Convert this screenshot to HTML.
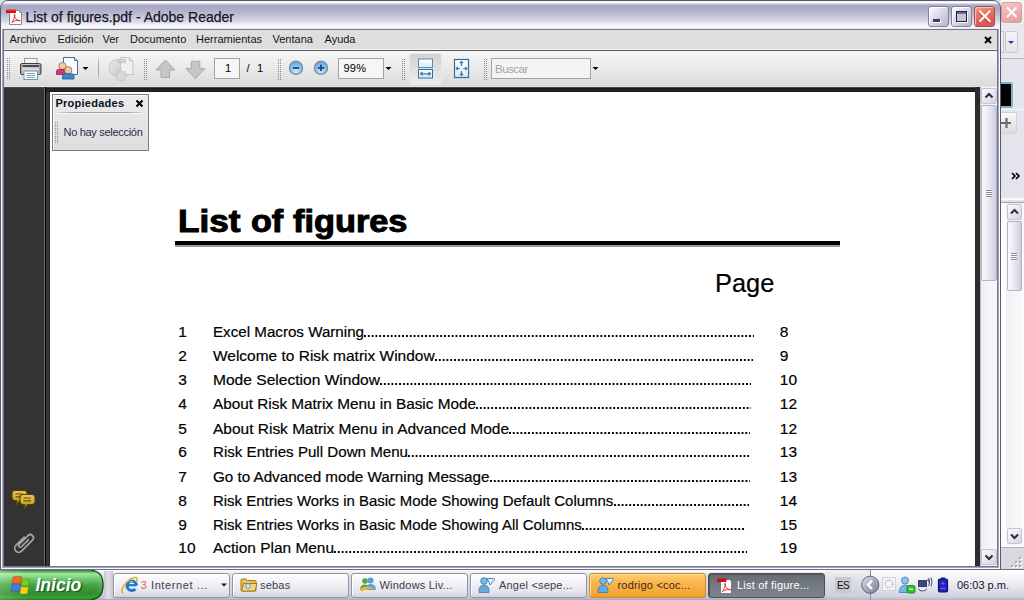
<!DOCTYPE html>
<html><head><meta charset="utf-8">
<style>
*{margin:0;padding:0;box-sizing:border-box}
html,body{width:1024px;height:600px;overflow:hidden;background:#dcdce2;font-family:"Liberation Sans",sans-serif;position:relative}
.a{position:absolute}
.t{position:absolute;white-space:nowrap;line-height:1}
.h{top:205.6px;font-size:30.5px;font-weight:bold;color:#000;transform-origin:0 0;-webkit-text-stroke:1px #000}
.d{font-size:15.5px;color:#000;transform-origin:0 0;-webkit-text-stroke:0.2px #000}
.dots{height:2px;background-image:linear-gradient(to right,#000 0,#000 1.9px,transparent 1.9px);background-size:3.82px 2px;background-repeat:repeat-x}
.m{font-size:11px;color:#141414;top:34.2px}
.grip{position:absolute;width:3px;height:22px;top:58px;background-image:radial-gradient(circle at 0.5px 0.5px,#8a8a8a 0.7px,transparent 0.8px);background-size:2px 2px}
.tbtn{position:absolute;top:6px;width:21px;height:21px;border:1px solid #8080a4;border-radius:3px;background:linear-gradient(135deg,#fafafe 0%,#e6e6f0 30%,#c8c8dc 70%,#b4b4cc 100%);box-shadow:inset 1px 1px 0 #fcfcff}
.sbtn{position:absolute;width:16px;height:16px;border:1px solid #c8c8d4;border-radius:2px;background:linear-gradient(to right,#e8e8f0,#f4f4f8 40%,#d8d8e4)}
</style></head><body>

<!-- background window at right -->
<div class="a" style="left:1000px;top:0;width:24px;height:570px;background:#e2e2ea"></div>

<!-- front window frame -->
<div class="a" style="left:0;top:0;width:1001px;height:570px;background:#a4a4bc;border:1px solid #5a5a6e;border-radius:8px 8px 0 0"></div>
<div class="a" style="left:1px;top:20px;width:999px;height:549px;border-left:1px solid #fafaff;border-right:1px solid #fafaff;border-bottom:1px solid #fafaff"></div>
<div class="a" style="left:3px;top:29px;width:995px;height:538px;border:1px solid #74748a"></div>

<!-- title bar -->
<div class="a" style="left:1px;top:1px;width:999px;height:28px;border-radius:7px 7px 0 0;background:linear-gradient(#e8e8f0 0px,#ffffff 1.2px,#ffffff 1.8px,#c0c0d4 3px,#a8a8c6 5px,#b0b0ca 10px,#c4c4d4 15px,#d8d8e4 20px,#ececf2 23px,#fbfbfd 26px,#e6e6ee 28px)"></div>
<!-- pdf icon -->
<svg class="a" style="left:5px;top:8px" width="18" height="18" viewBox="0 0 18 18">
 <path d="M4.5 2.5 H14.5 L16.5 4.5 V16.5 H4.5 Z" fill="#fff" stroke="#8a8a8a" stroke-width="1"/>
 <path d="M14.5 2.5 V4.5 H16.5" fill="#ddd" stroke="#8a8a8a" stroke-width="1"/>
 <rect x="1" y="1.5" width="10" height="3.5" fill="#d01010"/>
 <rect x="1" y="1.5" width="10" height="1" fill="#f06060"/>
 <path d="M7 14.5 C8.5 12 10 9 10 7 C10 6 9 6 9.2 7.5 C9.5 10 12 12.5 14.5 13 C15.5 13.2 15.5 12.5 14 12.3 C11.5 12 9 13 7 14.5 Z" fill="none" stroke="#e02020" stroke-width="0.9"/>
</svg>
<div class="t" style="left:25.4px;top:10.35px;font-size:14px;color:#161628;-webkit-text-stroke:0.25px #161628">List of figures.pdf - Adobe Reader</div>

<!-- title buttons -->
<div class="tbtn" style="left:928px"></div>
<div class="a" style="left:933px;top:20px;width:8px;height:3px;background:#fff"></div>
<div class="a" style="left:933px;top:19px;width:7px;height:3px;background:#3c3c56"></div>
<div class="tbtn" style="left:951px"></div>
<div class="a" style="left:957px;top:12px;width:11px;height:11px;border:1px solid #fff"></div>
<div class="a" style="left:956px;top:11px;width:11px;height:11px;border:1px solid #20203a;background:#c4c4d4"></div>
<div class="a" style="left:957px;top:12px;width:9px;height:2px;background:#6c6c84"></div>
<div class="a" style="left:974px;top:6px;width:21px;height:21px;border:1px solid #a84c4c;border-radius:3px;background:linear-gradient(160deg,#f4a08a 0%,#e87866 35%,#dc5a58 75%,#d45454 100%);box-shadow:inset 1px 1px 0 #f8c0b0"></div>
<svg class="a" style="left:974px;top:6px" width="21" height="21" viewBox="0 0 21 21">
 <path d="M6 5.5 L15.5 15 M15.5 5.5 L6 15" stroke="#7a2020" stroke-width="2.2" stroke-linecap="square" transform="translate(-0.6,0.6)" opacity="0.55"/>
 <path d="M6 5.5 L15.5 15 M15.5 5.5 L6 15" stroke="#ffffff" stroke-width="2" stroke-linecap="square"/>
</svg>

<!-- menu bar -->
<div class="a" style="left:4px;top:30px;width:993px;height:20px;background:#dedede"></div>
<div class="a" style="left:4px;top:49px;width:993px;height:1px;background:#f4f4f4"></div>
<div class="a" style="left:4px;top:50px;width:993px;height:1px;background:#5c5c5c"></div>
<div class="t m" style="left:9.5px">Archivo</div>
<div class="t m" style="left:57.5px">Edición</div>
<div class="t m" style="left:102.5px">Ver</div>
<div class="t m" style="left:130px">Documento</div>
<div class="t m" style="left:196px">Herramientas</div>
<div class="t m" style="left:272.5px">Ventana</div>
<div class="t m" style="left:324.5px">Ayuda</div>
<svg class="a" style="left:982.5px;top:35px" width="10" height="10" viewBox="0 0 10 10"><path d="M2 2 L8 8 M8 2 L2 8" stroke="#000" stroke-width="2"/></svg>

<!-- toolbar -->
<div class="a" style="left:4px;top:51px;width:993px;height:36px;background:linear-gradient(#f6f6f6,#ececec 40%,#dadada)"></div>
<div class="a" style="left:4px;top:86px;width:993px;height:1px;background:#e4e4e4"></div>

<!-- content area -->
<div class="a" style="left:4px;top:87px;width:993px;height:479px;background:#353535"></div>
<div class="a" style="left:4px;top:87px;width:993px;height:5px;background:linear-gradient(#4a4a4a 0,#4a4a4a 1px,#1a1a1a 1px,#1c1c1c 2px,#242424 2px,#242424 4px,#1a1a1a 4px)"></div>
<div class="a" style="left:4px;top:88px;width:40px;height:478px;background:#333333"></div>
<div class="a" style="left:44px;top:88px;width:1px;height:478px;background:#686868"></div>
<div class="a" style="left:45px;top:87px;width:1px;height:479px;background:#000"></div>
<div class="a" style="left:49px;top:92px;width:1px;height:474px;background:#282828"></div>
<!-- page -->
<div class="a" style="left:50px;top:92px;width:925px;height:474px;background:#fff"></div>

<!-- toolbar items -->
<div class="grip" style="left:7px;top:58px"></div>
<!-- printer -->
<svg class="a" style="left:19px;top:56px" width="24" height="25" viewBox="0 0 24 25">
 <defs><linearGradient id="pb" x1="0" y1="0" x2="1" y2="0"><stop offset="0" stop-color="#9a9a9a"/><stop offset="0.15" stop-color="#cfcfcf"/><stop offset="0.85" stop-color="#c4c4c4"/><stop offset="1" stop-color="#8a8a8a"/></linearGradient></defs>
 <rect x="5.5" y="2.5" width="12.5" height="6.5" fill="#eef6f8" stroke="#8aa4a8" stroke-width="1"/>
 <rect x="1.5" y="7.5" width="20.5" height="11" rx="1.5" fill="url(#pb)" stroke="#404040" stroke-width="1"/>
 <rect x="3.5" y="9" width="16.5" height="2" fill="#4a4a4a"/>
 <rect x="3.5" y="12.5" width="16.5" height="2" fill="#dcdcdc"/>
 <rect x="5" y="15" width="13.5" height="8.5" fill="#f8fcfe" stroke="#6a98a8" stroke-width="1"/>
 <path d="M7.5 17.5 H16 M7.5 19.5 H16 M7.5 21.5 H16" stroke="#8a9aa4" stroke-width="0.9"/>
</svg>
<!-- share/collab icon -->
<svg class="a" style="left:55px;top:56px" width="24" height="24" viewBox="0 0 24 24">
 <path d="M8.5 1.5 H19.5 L22.5 4.5 V18.5 H8.5 Z" fill="#f8fbff" stroke="#4a6a98" stroke-width="1"/>
 <path d="M19.5 1.5 V4.5 H22.5" fill="#dde8f4" stroke="#4a6a98" stroke-width="1"/>
 <circle cx="7.5" cy="10" r="3.6" fill="#f4c89a" stroke="#a07040" stroke-width="0.8"/>
 <path d="M1.5 18.5 V15.5 Q1.5 13.5 3.5 13.5 H11.5 Q13.5 13.5 13.5 15.5 V18.5 Z" fill="#d03a70" stroke="#902050" stroke-width="0.8"/>
 <circle cx="13.3" cy="14.2" r="3.6" fill="#f4c89a" stroke="#a07040" stroke-width="0.8"/>
 <path d="M7.5 23 V19.8 Q7.5 17.8 9.5 17.8 H17 Q19 17.8 19 19.8 V23 Z" fill="#3a88cc" stroke="#1a5a98" stroke-width="0.8"/>
</svg>
<svg class="a" style="left:82px;top:66px" width="7" height="5" viewBox="0 0 7 5"><path d="M0.5 1 H6.5 L3.5 4 Z" fill="#000"/></svg>
<div class="a" style="left:98px;top:57px;width:1px;height:23px;background:linear-gradient(#e8e8e8,#a8a8a8 30%,#a8a8a8 70%,#e0e0e0)"></div>
<!-- disabled icon -->
<svg class="a" style="left:107px;top:56px" width="28" height="26" viewBox="0 0 28 26">
 <defs><linearGradient id="dg" x1="0" y1="0" x2="1" y2="1"><stop offset="0" stop-color="#e8e8e8"/><stop offset="1" stop-color="#c8c8c8"/></linearGradient></defs>
 <circle cx="10.5" cy="12" r="8.5" fill="url(#dg)" stroke="#c8c8c8" stroke-width="1"/>
 <path d="M13.5 1.5 H22.5 L26 5 V18.5 H13.5 Z" fill="#f0f0f0" stroke="#c4c4c4" stroke-width="1"/>
 <path d="M22.5 1.5 V5 H26" fill="#e4e4e4" stroke="#c4c4c4" stroke-width="1"/>
 <rect x="11" y="3.5" width="7.5" height="3" fill="#d4d4d4" stroke="#bcbcbc" stroke-width="0.7"/>
 <path d="M14 13.5 L15.6 16 L18.5 15.3 L17.6 18.2 L20 20 L17.6 21.6 L18.2 24.5 L15.3 23.8 L14 26 L12.4 23.8 L9.5 24.5 L10.2 21.6 L8 20 L10.4 18.2 L9.5 15.3 L12.4 16 Z" fill="#d8d8d8" stroke="#c4c4c4" stroke-width="0.8"/>
</svg>
<div class="grip" style="left:144px;top:59px"></div>
<!-- up/down arrows -->
<svg class="a" style="left:155px;top:59px" width="21" height="20" viewBox="0 0 21 20">
 <path d="M10.5 1 L19.8 11 H14.5 V18.5 H6 V11 H1.2 Z" fill="#c6c6c6" stroke="#a8a8a8" stroke-width="1"/>
</svg>
<svg class="a" style="left:185px;top:60px" width="21" height="20" viewBox="0 0 21 20">
 <path d="M6.3 1.3 H14.8 V8.6 H19.8 L10.4 18.6 L1 8.6 H6.3 Z" fill="#c6c6c6" stroke="#a8a8a8" stroke-width="1"/>
</svg>
<!-- page box -->
<div class="a" style="left:214px;top:58px;width:26px;height:21px;border:1px solid #a4a4a4;background:#f6f6f6"></div>
<div class="t" style="left:225px;top:62.8px;font-size:11px;color:#000">1</div>
<div class="t" style="left:246.5px;top:62.8px;font-size:11px;color:#000">/</div>
<div class="t" style="left:257px;top:62.8px;font-size:11px;color:#000">1</div>
<div class="grip" style="left:278px;top:59px"></div>
<!-- zoom circles -->
<svg class="a" style="left:287px;top:59px" width="18" height="18" viewBox="0 0 18 18">
 <defs><radialGradient id="zg" cx="0.5" cy="0.75" r="0.7"><stop offset="0" stop-color="#c8e8ff"/><stop offset="0.6" stop-color="#8cc0ec"/><stop offset="1" stop-color="#6aa0d4"/></radialGradient></defs>
 <circle cx="9" cy="8.8" r="6.6" fill="url(#zg)" stroke="#7a8ea0" stroke-width="1.2"/>
 <rect x="5.8" y="8" width="6.4" height="1.8" fill="#1a4a80"/>
</svg>
<svg class="a" style="left:312px;top:59px" width="18" height="18" viewBox="0 0 18 18">
 <circle cx="9" cy="8.8" r="6.6" fill="url(#zg)" stroke="#7a8ea0" stroke-width="1.2"/>
 <rect x="5.8" y="8" width="6.4" height="1.8" fill="#1a4a80"/>
 <rect x="8.1" y="5.7" width="1.8" height="6.4" fill="#1a4a80"/>
</svg>
<!-- zoom box -->
<div class="a" style="left:338px;top:58px;width:46px;height:21px;border:1px solid #a4a4a4;background:#f6f6f6"></div>
<div class="t" style="left:343.5px;top:62.6px;font-size:11px;color:#000;letter-spacing:0.2px">99%</div>
<svg class="a" style="left:385px;top:66px" width="7" height="5" viewBox="0 0 7 5"><path d="M0.5 1 H6.5 L3.5 4 Z" fill="#000"/></svg>
<div class="grip" style="left:402px;top:59px"></div>
<!-- pressed fit-width button -->
<div class="a" style="left:409px;top:53px;width:33px;height:32px;border:1px solid #e8e8e8;border-radius:3px;background:linear-gradient(#d2d2d2,#dcdcdc 40%,#ececec)"></div>
<svg class="a" style="left:417px;top:58px" width="18" height="22" viewBox="0 0 18 22">
 <defs><linearGradient id="fg" x1="0" y1="0" x2="0" y2="1"><stop offset="0" stop-color="#ffffff"/><stop offset="1" stop-color="#d8ecf8"/></linearGradient></defs>
 <rect x="1.5" y="1" width="14" height="8.5" fill="url(#fg)" stroke="#5a8ab8" stroke-width="1" stroke-dasharray="0"/>
 <rect x="1.5" y="11.5" width="14" height="8.5" fill="url(#fg)" stroke="#3a6a98" stroke-width="1"/>
 <path d="M3.5 15.8 H13.5 M5.5 14 L3.5 15.8 L5.5 17.6 M11.5 14 L13.5 15.8 L11.5 17.6" fill="none" stroke="#3a78b0" stroke-width="1.2"/>
</svg>
<!-- fit page icon -->
<svg class="a" style="left:453px;top:58px" width="17" height="21" viewBox="0 0 17 21">
 <rect x="1.5" y="1.5" width="14" height="18" fill="url(#fg)" stroke="#3a6a98" stroke-width="1.2"/>
 <path d="M8.5 3.5 V8 M6.8 5.2 L8.5 3.5 L10.2 5.2 M8.5 13 V17.5 M6.8 15.8 L8.5 17.5 L10.2 15.8 M3.2 10.5 H6.8 M4.8 8.8 L3.2 10.5 L4.8 12.2 M10.2 10.5 H13.8 M12.2 8.8 L13.8 10.5 L12.2 12.2" fill="none" stroke="#3a78b0" stroke-width="1.2"/>
</svg>
<div class="grip" style="left:484px;top:59px"></div>
<!-- search box -->
<div class="a" style="left:491px;top:58px;width:100px;height:21px;border:1px solid #a4a4a4;background:#f4f4f4"></div>
<div class="t" style="left:495px;top:63.8px;font-size:11.5px;color:#a4a4a4;letter-spacing:-0.5px">Buscar</div>
<svg class="a" style="left:592px;top:66px" width="7" height="5" viewBox="0 0 7 5"><path d="M0.5 1 H6.5 L3.5 4 Z" fill="#000"/></svg>
<!-- document content -->
<div class="t h" style="left:178px;transform:scaleX(1.15)">List</div>
<div class="t h" style="left:251px;transform:scaleX(1.12)">of</div>
<div class="t h" style="left:292.5px;transform:scaleX(1.125)">figures</div>
<div class="a" style="left:175px;top:241px;width:665px;height:4px;background:#000"></div>
<div class="a" style="left:175px;top:245px;width:665px;height:1.5px;background:#9a9a9a"></div>
<div class="t" style="left:715.3px;top:270.5px;font-size:25px;color:#000;transform:scaleX(1.015);-webkit-text-stroke:0.2px #000;transform-origin:0 0">Page</div>
<div class="t d" style="left:178.3px;top:323.63px">1</div>
<div class="t d" style="left:212.8px;top:323.63px;transform:scaleX(0.9775)">Excel Macros Warning</div>
<div class="a dots" style="left:364.2px;top:334.8px;width:389.7px"></div>
<div class="t d" style="left:779.8px;top:323.63px">8</div>
<div class="t d" style="left:178.3px;top:347.58px">2</div>
<div class="t d" style="left:212.8px;top:347.58px;transform:scaleX(0.9985)">Welcome to Risk matrix Window</div>
<div class="a dots" style="left:434.8px;top:358.7px;width:318.3px"></div>
<div class="t d" style="left:779.8px;top:347.58px">9</div>
<div class="t d" style="left:178.3px;top:371.88px">3</div>
<div class="t d" style="left:212.8px;top:371.88px;transform:scaleX(1.0043)">Mode Selection Window</div>
<div class="a dots" style="left:380.2px;top:383.0px;width:371.3px"></div>
<div class="t d" style="left:779.8px;top:371.88px">10</div>
<div class="t d" style="left:178.3px;top:395.63px">4</div>
<div class="t d" style="left:212.8px;top:395.63px;transform:scaleX(0.9880)">About Risk Matrix Menu in Basic Mode</div>
<div class="a dots" style="left:476.2px;top:406.8px;width:275.3px"></div>
<div class="t d" style="left:779.8px;top:395.63px">12</div>
<div class="t d" style="left:178.3px;top:420.88px">5</div>
<div class="t d" style="left:212.8px;top:420.88px;transform:scaleX(0.9988)">About Risk Matrix Menu in Advanced Mode</div>
<div class="a dots" style="left:509.2px;top:432.0px;width:240.7px"></div>
<div class="t d" style="left:779.8px;top:420.88px">12</div>
<div class="t d" style="left:178.3px;top:443.68px">6</div>
<div class="t d" style="left:212.8px;top:443.68px;transform:scaleX(0.9757)">Risk Entries Pull Down Menu</div>
<div class="a dots" style="left:408.2px;top:454.8px;width:340.9px"></div>
<div class="t d" style="left:779.8px;top:443.68px">13</div>
<div class="t d" style="left:178.3px;top:468.58px">7</div>
<div class="t d" style="left:212.8px;top:468.58px;transform:scaleX(0.9800)">Go to Advanced mode Warning Message</div>
<div class="a dots" style="left:489.6px;top:479.7px;width:260.9px"></div>
<div class="t d" style="left:779.8px;top:468.58px">13</div>
<div class="t d" style="left:178.3px;top:492.68px">8</div>
<div class="t d" style="left:212.8px;top:492.68px;transform:scaleX(0.9647)">Risk Entries Works in Basic Mode Showing Default Columns</div>
<div class="a dots" style="left:613.5px;top:503.8px;width:135.0px"></div>
<div class="t d" style="left:779.8px;top:492.68px">14</div>
<div class="t d" style="left:178.3px;top:516.58px">9</div>
<div class="t d" style="left:212.8px;top:516.58px;transform:scaleX(0.9647)">Risk Entries Works in Basic Mode Showing All Columns</div>
<div class="a dots" style="left:581.9px;top:527.7px;width:164.0px"></div>
<div class="t d" style="left:779.8px;top:516.58px">15</div>
<div class="t d" style="left:178.3px;top:539.88px">10</div>
<div class="t d" style="left:212.8px;top:539.88px;transform:scaleX(0.9959)">Action Plan Menu</div>
<div class="a dots" style="left:334.2px;top:551.0px;width:413.3px"></div>
<div class="t d" style="left:779.8px;top:539.88px">19</div>

<!-- Propiedades panel -->
<div class="a" style="left:52px;top:94px;width:97px;height:57px;border:1px solid #7c7c7c;background:linear-gradient(#ececec,#dedede);box-shadow:inset 1px 1px 0 #fafafa"></div>
<div class="t" style="left:55.5px;top:98.3px;font-size:11px;font-weight:bold;color:#08121e;letter-spacing:0.25px">Propiedades</div>
<svg class="a" style="left:135px;top:99px" width="9" height="9" viewBox="0 0 9 9"><path d="M1.5 1.5 L7.5 7.5 M7.5 1.5 L1.5 7.5" stroke="#000" stroke-width="2.1"/></svg>
<div class="a" style="left:57px;top:112px;width:86px;height:1px;background:linear-gradient(to right,#d8d8d8,#a0a0a0 20%,#a0a0a0 80%,#d8d8d8)"></div>
<div class="a" style="left:57px;top:113px;width:86px;height:1px;background:#f8f8f8"></div>
<div class="grip" style="left:55px;top:122px;height:22px"></div>
<div class="t" style="left:63.5px;top:126.6px;font-size:11px;color:#2c2c44;letter-spacing:-0.3px">No hay selección</div>

<!-- left nav icons -->
<svg class="a" style="left:10px;top:489px" width="28" height="22" viewBox="0 0 28 22">
 <defs><linearGradient id="bg1" x1="0" y1="0" x2="0" y2="1"><stop offset="0" stop-color="#e4c858"/><stop offset="0.6" stop-color="#ccaa2c"/><stop offset="1" stop-color="#aa8a1c"/></linearGradient></defs>
 <path d="M5 1.5 H14 Q17 1.5 17 4.5 V8.5 Q17 11.5 14 11.5 H9.5 L6.5 16 L6.8 11.5 H5 Q2 11.5 2 8.5 V4.5 Q2 1.5 5 1.5 Z" fill="url(#bg1)" stroke="#5a4206" stroke-width="1.1"/>
 <path d="M5.5 5 H13 M5.5 7.8 H13" stroke="#6a4e08" stroke-width="1.2"/>
 <path d="M13 5.5 H22 Q25 5.5 25 8.5 V12.5 Q25 15.5 22 15.5 H17.5 L14.5 20 L14.8 15.5 H13 Q10 15.5 10 12.5 V8.5 Q10 5.5 13 5.5 Z" fill="url(#bg1)" stroke="#5a4206" stroke-width="1.1"/>
 <path d="M13.5 9 H21 M13.5 11.8 H21" stroke="#6a4e08" stroke-width="1.2"/>
</svg>
<svg class="a" style="left:8px;top:527px" width="32" height="32" viewBox="0 0 32 32">
 <g transform="rotate(-45 16 16)" fill="none" stroke="#a4a4a4" stroke-width="1.7">
  <path d="M21 12 H8.5 A4 4 0 0 0 8.5 20 H24 A3.2 3.2 0 0 0 24 13.6 H11.5 A1.6 1.6 0 0 0 11.5 16.8 H22"/>
 </g>
</svg>
<!-- main scrollbar -->
<div class="a" style="left:975px;top:87px;width:5px;height:479px;background:#2c2c2c"></div>
<div class="a" style="left:980px;top:87px;width:17px;height:479px;background:linear-gradient(to right,#ececf4,#f2f2f8 40%,#f8f8fc)"></div>
<div class="a" style="left:980px;top:87px;width:1px;height:479px;background:#bcbcc4"></div>
<div class="sbtn" style="left:981px;top:88px;background:linear-gradient(135deg,#fcfcfe,#e4e4ee 60%,#d4d4e2);border-color:#c4c4d0"></div>
<svg class="a" style="left:981px;top:88px" width="16" height="16" viewBox="0 0 16 16"><path d="M4.5 9.5 L8 6 L11.5 9.5" fill="none" stroke="#2c2c3c" stroke-width="2"/></svg>
<div class="a" style="left:981px;top:105px;width:16px;height:176px;border:1px solid #b4b4c4;border-radius:2px;background:linear-gradient(to right,#f8f8fc,#eeeef6 35%,#d4d4e4 90%,#c8c8da)"></div>
<div class="a" style="left:986px;top:190px;width:6px;height:7px;background:repeating-linear-gradient(#8a8a8e 0 1px,#fff 1px 2px)"></div>
<div class="sbtn" style="left:981px;top:549px;background:linear-gradient(135deg,#fcfcfe,#e4e4ee 60%,#d4d4e2);border-color:#c4c4d0"></div>
<svg class="a" style="left:981px;top:549px" width="16" height="16" viewBox="0 0 16 16"><path d="M4.5 6.5 L8 10 L11.5 6.5" fill="none" stroke="#2c2c3c" stroke-width="2"/></svg>

<!-- background window details (right strip) -->
<div class="a" style="left:1001px;top:0;width:23px;height:24px;background:linear-gradient(#fafafc,#ececf2)"></div>
<div class="a" style="left:1001px;top:2px;width:21px;height:21px;border:1px solid #d4a0a0;border-radius:3px;background:linear-gradient(160deg,#f4c8c0,#e8aaa8 70%,#e0a0a0)"></div>
<svg class="a" style="left:1001px;top:2px" width="21" height="21" viewBox="0 0 21 21"><path d="M6 5.5 L15.5 15 M15.5 5.5 L6 15" stroke="#fff" stroke-width="2"/></svg>
<div class="a" style="left:1001px;top:24px;width:23px;height:35px;background:#e8e8ee"></div>
<div class="a" style="left:1001px;top:31px;width:3px;height:22px;border:1px solid #c8c8d4;border-left:none;background:#f0f0f4"></div>
<div class="a" style="left:1005px;top:31px;width:13px;height:22px;border:1px solid #c8c8d4;border-radius:2px;background:linear-gradient(#f4f4f8,#e4e4ec)"></div>
<svg class="a" style="left:1004.5px;top:39.5px" width="12" height="6" viewBox="0 0 12 6"><path d="M3 1 H9 L6 4 Z" fill="#1a3cb0"/></svg>
<div class="a" style="left:1001px;top:58px;width:23px;height:1px;background:#b4b4c0"></div>
<div class="a" style="left:1001px;top:59px;width:23px;height:140px;background:#e4e4ec"></div>
<div class="a" style="left:1001px;top:82px;width:12px;height:26px;background:#000;border:2px solid #78b4c4;border-left:none;border-radius:0 3px 3px 0"></div>
<div class="a" style="left:1001px;top:109px;width:23px;height:1px;background:#f6f6fa"></div>
<div class="a" style="left:1001px;top:112px;width:16px;height:22px;border:1px solid #d0d0d8;border-left:none;border-radius:0 3px 3px 0;background:linear-gradient(#fafafa,#dcdcdc)"></div>
<svg class="a" style="left:1001px;top:112px" width="14" height="22" viewBox="0 0 14 22"><path d="M0 11 H10 M5.5 6 V16" stroke="#6c6c6c" stroke-width="2.2"/></svg>
<svg class="a" style="left:1010px;top:171px" width="12" height="10" viewBox="0 0 12 10"><path d="M2 2 L5 5 L2 8 M6 2 L9 5 L6 8" fill="none" stroke="#000" stroke-width="1.6"/></svg>
<div class="a" style="left:1001px;top:198px;width:23px;height:2px;background:#fafafa"></div>
<div class="a" style="left:1001px;top:202px;width:23px;height:1px;background:#a4a4ac"></div>
<div class="a" style="left:1001px;top:203px;width:23px;height:344px;background:#fcfcfc"></div>
<div class="a" style="left:1006px;top:203px;width:16px;height:344px;background:linear-gradient(to right,#f0f0f4,#f8f8fa)"></div>
<div class="sbtn" style="left:1007px;top:204px;width:15px;background:linear-gradient(135deg,#fcfcfe,#e4e4ee 60%,#d4d4e2);border-color:#c4c4d0"></div>
<svg class="a" style="left:1007px;top:204px" width="15" height="16" viewBox="0 0 15 16"><path d="M4 9.5 L7.5 6 L11 9.5" fill="none" stroke="#2c2c3c" stroke-width="2"/></svg>
<div class="a" style="left:1007px;top:221px;width:15px;height:70px;border:1px solid #b4b4c4;border-radius:2px;background:linear-gradient(to right,#f8f8fc,#eeeef6 35%,#d4d4e4 90%,#c8c8da)"></div>
<div class="a" style="left:1011px;top:253px;width:6px;height:7px;background:repeating-linear-gradient(#8a8a8e 0 1px,#fff 1px 2px)"></div>
<div class="sbtn" style="left:1007px;top:528px;width:15px;background:linear-gradient(135deg,#fcfcfe,#e4e4ee 60%,#d4d4e2);border-color:#c4c4d0"></div>
<svg class="a" style="left:1007px;top:528px" width="15" height="16" viewBox="0 0 15 16"><path d="M4 6.5 L7.5 10 L11 6.5" fill="none" stroke="#2c2c3c" stroke-width="2"/></svg>
<div class="a" style="left:1001px;top:545px;width:23px;height:2px;background:#fafafa"></div>
<div class="a" style="left:1001px;top:547px;width:23px;height:1px;background:#b0b0b8"></div>
<div class="a" style="left:1001px;top:548px;width:23px;height:22px;background:#dadade"></div>
<svg class="a" style="left:1010px;top:556px" width="14" height="14" viewBox="0 0 14 14" fill="#fff">
 <rect x="10" y="2" width="2" height="2"/><rect x="6" y="6" width="2" height="2"/><rect x="10" y="6" width="2" height="2"/>
 <rect x="2" y="10" width="2" height="2"/><rect x="6" y="10" width="2" height="2"/><rect x="10" y="10" width="2" height="2"/>
</svg>
<svg class="a" style="left:1009px;top:555px" width="14" height="14" viewBox="0 0 14 14" fill="#a8a8b0">
 <rect x="10" y="2" width="2" height="2"/><rect x="6" y="6" width="2" height="2"/><rect x="10" y="6" width="2" height="2"/>
 <rect x="2" y="10" width="2" height="2"/><rect x="6" y="10" width="2" height="2"/><rect x="10" y="10" width="2" height="2"/>
</svg>

<!-- taskbar -->
<div class="a" style="left:0;top:569px;width:1024px;height:31px;background:linear-gradient(#6c6c84 0,#6c6c84 1px,#fafafc 1px,#fafafc 2px,#e8e8f0 4px,#dcdce6 12px,#d0d0de 24px,#c0c0d0 29px,#a8a8bc 31px)"></div>
<!-- start button -->
<svg class="a" style="left:0;top:570px" width="108" height="30" viewBox="0 0 108 30">
 <defs>
  <linearGradient id="sg" x1="0" y1="0" x2="0" y2="1">
   <stop offset="0" stop-color="#2a7a2a"/><stop offset="0.06" stop-color="#5ab85a"/><stop offset="0.13" stop-color="#a8e8a8"/><stop offset="0.3" stop-color="#70c870"/>
   <stop offset="0.5" stop-color="#44a444"/><stop offset="0.78" stop-color="#2e8e2e"/><stop offset="0.93" stop-color="#3a9e3a"/><stop offset="1" stop-color="#227a22"/>
  </linearGradient>
  <linearGradient id="sg2" x1="0" y1="0" x2="1" y2="0">
   <stop offset="0" stop-color="#fff" stop-opacity="0.2"/><stop offset="0.25" stop-color="#fff" stop-opacity="0"/><stop offset="0.85" stop-color="#000" stop-opacity="0"/><stop offset="1" stop-color="#fff" stop-opacity="0.12"/>
  </linearGradient>
 </defs>
 <path d="M0 0 H90 Q103.5 0 103.5 15 Q103.5 30 90 30 H0 Z" fill="url(#sg)"/>
 <path d="M0 0 H90 Q103.5 0 103.5 15 Q103.5 30 90 30 H0 Z" fill="url(#sg2)"/>
 <path d="M91 0.5 Q103 1 103 15 Q103 29 91 29.5" fill="none" stroke="#0e4a0e" stroke-width="1.2"/>
 <!-- windows flag -->
 <g transform="translate(11,6)">
  <path d="M2 1.2 Q6 -0.3 10.5 0.6 L9.6 7.6 Q5.5 6.6 1 7.6 Z" fill="#f06a20" stroke="#a84010" stroke-width="0.4"/>
  <path d="M11.2 2.6 Q14.6 3.6 18.6 2.6 L17.6 9.6 Q14 10.6 10.3 9.6 Z" fill="#78d020" stroke="#3a7a10" stroke-width="0.4"/>
  <path d="M0.9 8.3 Q4.6 7.3 9.3 8.3 L8.3 15.3 Q4 14.3 -0.1 15.3 Z" fill="#4878e8" stroke="#1a4a9a" stroke-width="0.4"/>
  <path d="M10 10.4 Q13.6 11.4 17.4 10.4 L16.4 17.4 Q12.6 18.4 9 17.4 Z" fill="#f8d018" stroke="#a08010" stroke-width="0.4"/>
 </g>
 <text x="36" y="21.4" font-family="Liberation Sans" font-size="17.6" font-weight="bold" font-style="italic" fill="#0a3a0a" opacity="0.55" transform="translate(1,1)">Inicio</text>
 <text x="35.4" y="21.4" font-family="Liberation Sans" font-size="17.6" font-weight="bold" font-style="italic" fill="#ffffff">Inicio</text>
</svg>

<!-- taskbar buttons -->
<style>
.tb{position:absolute;top:573px;height:25px;width:117px;border:1px solid #9494a8;border-radius:3px;background:linear-gradient(#ffffff,#f4f4f8 30%,#e6e6ee 75%,#d4d4e0);box-shadow:inset 1px 1px 0 #fff}
.tt{position:absolute;top:579.7px;font-size:11px;color:#3c3c4c;white-space:nowrap;line-height:1;letter-spacing:0.2px}
</style>
<div class="a" style="left:104px;top:571px;width:9px;height:28px;background:linear-gradient(to right,#c8c8d4,#e0e0e8 50%,#c4c4d0)"></div>
<div class="tb" style="left:113px"></div>
<div class="tb" style="left:232px"></div>
<div class="tb" style="left:351px"></div>
<div class="tb" style="left:470px"></div>
<div class="tb" style="left:589px;border-color:#d08a2a;background:linear-gradient(#fdd070,#fab650 35%,#f6a838 80%,#f09c30);box-shadow:inset 1px 1px 0 #ffe0a0"></div>
<div class="tb" style="left:708px;border-color:#4a5058;background:linear-gradient(#646a72,#727880 40%,#7c838a);box-shadow:inset 1px 1px 0 #50565e"></div>

<!-- IE icon -->
<svg class="a" style="left:119px;top:575px" width="21" height="20" viewBox="0 0 21 20">
 <path d="M17.6 10.2 A4.8 4.8 0 1 0 16.4 14" fill="none" stroke="#1e78d0" stroke-width="3"/>
 <path d="M9 10.2 H17.8" stroke="#1e78d0" stroke-width="2.2"/>
 <path d="M10.5 7 Q12.5 6 14.5 7" stroke="#8cd0ff" stroke-width="1" fill="none"/>
 <path d="M4 18.5 Q1 15 6.5 8.5 Q12 2 17 2.5 Q19.5 3.5 17 7" fill="none" stroke="#d8b040" stroke-width="1.6"/>
</svg>
<div class="tt" style="left:140.8px;color:#e0684a;letter-spacing:0">3</div>
<div class="tt" style="left:151px;letter-spacing:0.6px">Internet ...</div>
<svg class="a" style="left:220px;top:582px" width="8" height="6" viewBox="0 0 8 6"><path d="M1 1.5 H7 L4 4.5 Z" fill="#202030"/></svg>

<!-- folder icon -->
<svg class="a" style="left:240px;top:577px" width="18" height="16" viewBox="0 0 18 16">
 <path d="M1 3 Q1 2 2 2 H6 L7.5 3.5 H15 Q16 3.5 16 4.5 V13 Q16 14 15 14 H2 Q1 14 1 13 Z" fill="#e8c060" stroke="#a07820" stroke-width="1"/>
 <path d="M3.5 6.5 H17 L15 14 H1.5 Z" fill="#f8d878" stroke="#a07820" stroke-width="1"/>
 <circle cx="8" cy="9" r="2.6" fill="#b8e4f0" stroke="#6a8ea0" stroke-width="0.8"/>
</svg>
<div class="tt" style="left:260px">sebas</div>

<!-- MSN icon -->
<svg class="a" style="left:359px;top:577px" width="19" height="16" viewBox="0 0 19 16">
 <circle cx="6" cy="4" r="2.8" fill="#4aa84a"/>
 <circle cx="11.5" cy="3.5" r="3" fill="#5aa0d8"/>
 <path d="M1 13 Q1 7.5 6 7.5 Q9 7.5 10 10 Z" fill="#4aa84a"/>
 <path d="M6 13 Q6 7 11.5 7 Q17 7 17 13 Z" fill="#5aa0d8"/>
 <path d="M1 11.5 Q9 7 17.5 12.5 Q10 10.5 2 14.5 Z" fill="#f0b030"/>
</svg>
<div class="tt" style="left:379.5px">Windows Liv...</div>

<!-- messenger person icons -->
<svg class="a" style="left:478px;top:576px" width="18" height="18" viewBox="0 0 18 18">
 <path d="M9 2.5 L16 2.5 Q17 2.5 16.5 3.5 L12 9 L11 6 Z" fill="#e4f0fa" stroke="#4a88c0" stroke-width="1"/>
 <circle cx="6" cy="5" r="3.3" fill="#7ab8e4" stroke="#3a78b0" stroke-width="0.8"/>
 <path d="M1 16.5 Q0.5 9 6 9 Q11.5 9 11 16.5 Z" fill="#6aa8dc" stroke="#3a78b0" stroke-width="0.8"/>
</svg>
<div class="tt" style="left:499px">Angel &lt;sepe...</div>
<svg class="a" style="left:597px;top:576px" width="18" height="18" viewBox="0 0 18 18">
 <path d="M9 2.5 L16 2.5 Q17 2.5 16.5 3.5 L12 9 L11 6 Z" fill="#e4f0fa" stroke="#4a88c0" stroke-width="1"/>
 <circle cx="6" cy="5" r="3.3" fill="#7ab8e4" stroke="#3a78b0" stroke-width="0.8"/>
 <path d="M1 16.5 Q0.5 9 6 9 Q11.5 9 11 16.5 Z" fill="#6aa8dc" stroke="#3a78b0" stroke-width="0.8"/>
</svg>
<div class="tt" style="left:617.5px;color:#3a2a14">rodrigo &lt;coc...</div>

<!-- pdf task icon -->
<svg class="a" style="left:716px;top:578px" width="18" height="17" viewBox="0 0 18 17">
 <path d="M4.5 1.5 H13.5 L15.5 3.5 V15.5 H4.5 Z" fill="#fff" stroke="#7a7a7a" stroke-width="1"/>
 <rect x="1" y="0.5" width="9.5" height="3.5" fill="#d01010"/>
 <path d="M6.5 13.5 C8 11 9.5 8 9.5 6 C9.5 5 8.5 5 8.7 6.5 C9 9 11.5 11.5 14 12 C15 12.2 15 11.5 13.5 11.3 C11 11 8.5 12 6.5 13.5 Z" fill="none" stroke="#e02020" stroke-width="0.9"/>
</svg>
<div class="tt" style="left:737px;color:#ffffff">List of figure...</div>

<!-- tray -->
<div class="a" style="left:826px;top:570px;width:45px;height:30px;background:linear-gradient(#f0f0f6,#dcdce6 40%,#d0d0de 85%,#b8b8ca)"></div>
<div class="a" style="left:835px;top:577px;width:16px;height:16px;background:#c8c8d0"></div>
<div class="t" style="left:836.8px;top:580px;font-size:10.8px;color:#101018;letter-spacing:-0.6px;transform:scaleX(0.92);transform-origin:0 0">ES</div>
<div class="a" style="left:870px;top:570px;width:154px;height:30px;background:linear-gradient(#ffffff,#f6f6fa 20%,#e4e4ee 60%,#cfcfde 90%,#b4b4c8)"></div>
<div class="a" style="left:870px;top:570px;width:1px;height:30px;background:#8a8a9e"></div>
<svg class="a" style="left:860px;top:575px" width="20" height="20" viewBox="0 0 20 20">
 <defs><linearGradient id="cg" x1="0" y1="0" x2="1" y2="1"><stop offset="0" stop-color="#e8e8f2"/><stop offset="0.5" stop-color="#a8a8c0"/><stop offset="1" stop-color="#7a7a98"/></linearGradient></defs>
 <circle cx="10.3" cy="9.8" r="8.6" fill="url(#cg)" stroke="#5a5a70" stroke-width="0.9"/>
 <path d="M12 5.5 L8 9.8 L12 14" fill="none" stroke="#fff" stroke-width="2.4"/>
</svg>
<svg class="a" style="left:882px;top:577px" width="15" height="14" viewBox="0 0 15 14">
 <rect x="0.5" y="0.5" width="13" height="13" fill="#f4f4f4" stroke="#d0d0d8"/>
 <circle cx="7" cy="7" r="3.8" fill="none" stroke="#8a8a8a" stroke-width="1" stroke-dasharray="1.2 1.2"/>
</svg>
<svg class="a" style="left:899px;top:576px" width="17" height="18" viewBox="0 0 17 18">
 <circle cx="6" cy="4.5" r="3.5" fill="#8ac4ec" stroke="#3a7ab0" stroke-width="0.8"/>
 <path d="M0.5 16.5 Q0.5 9 6 9 Q11 9 11 16.5 Z" fill="#7ab8e4" stroke="#3a7ab0" stroke-width="0.8"/>
 <rect x="8" y="9.5" width="8" height="7.5" rx="1.5" fill="#30c030" stroke="#108010" stroke-width="0.8"/>
 <rect x="10" y="12.5" width="4" height="1.5" fill="#c0ffc0"/>
</svg>
<svg class="a" style="left:917px;top:577px" width="16" height="15" viewBox="0 0 16 15">
 <rect x="1.5" y="3.5" width="8" height="6" fill="#3a4a80" stroke="#202850" stroke-width="0.8"/>
 <path d="M1.5 11.5 Q1.5 14 5.5 14 Q9.5 14 9.5 11.5" fill="#fff" stroke="#3a4a80" stroke-width="1"/>
 <path d="M10 3 H12 V6 M11.8 1 Q13.5 5 11.8 9 M14 0.5 Q16 5 14 9.5" fill="none" stroke="#2a3a70" stroke-width="0.9"/>
</svg>
<svg class="a" style="left:937px;top:577px" width="12" height="16" viewBox="0 0 12 16">
 <rect x="4" y="0.5" width="4" height="2" fill="#1a1a60"/>
 <rect x="1.5" y="2" width="9" height="13" rx="1.5" fill="#1428d8" stroke="#0a1050" stroke-width="1.2"/>
 <path d="M6 5 V8 M4.5 6.5 H7.5" stroke="#e04080" stroke-width="1"/>
 <path d="M3.5 11.5 H8.5" stroke="#e04080" stroke-width="1"/>
</svg>
<div class="t" style="left:957px;top:579.8px;font-size:11px;color:#141424">06:03 p.m.</div>
</body></html>
